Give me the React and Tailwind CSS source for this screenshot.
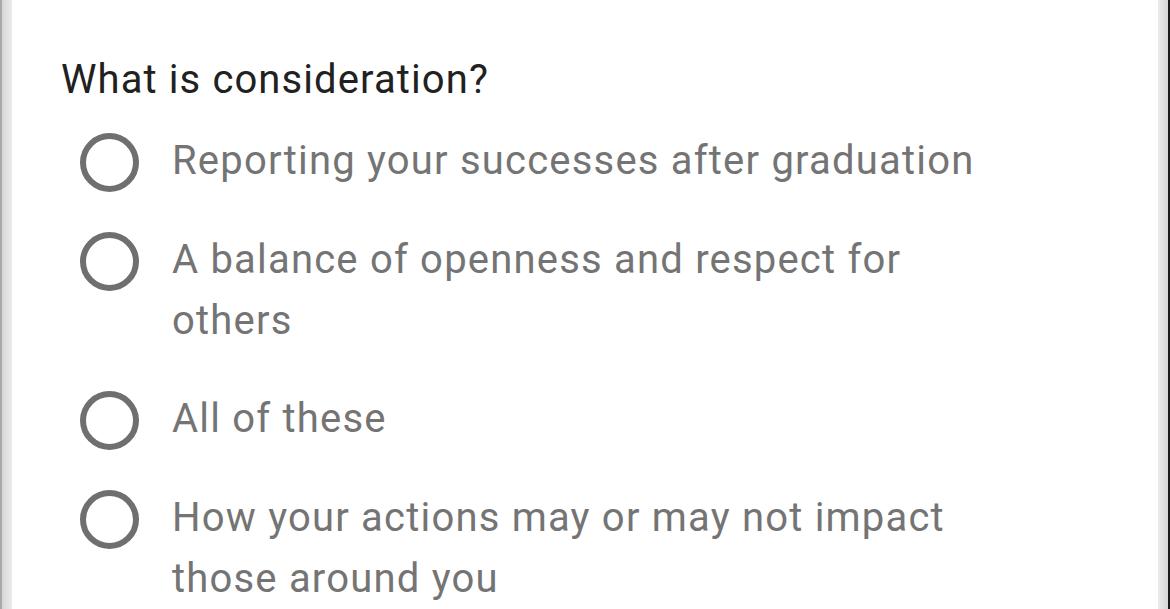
const options = [
  "Reporting your successes after graduation",
  "A balance of openness and respect for others",
  "All of these",
  "How your actions may or may not impact those around you",
];

function Radio() {
  return (
    <div className="mt-[3px] h-[59px] w-[59px] shrink-0 rounded-full border-[6px] border-[#6f6f6f]" />
  );
}

export default function App() {
  return (
    <div className="flex h-[609px] w-[1170px] overflow-hidden bg-white font-['Roboto',sans-serif]">
      <div className="flex w-[12px] shrink-0">
        <div className="w-[2px] bg-[#a9a9a9]" />
        <div className="flex-1 bg-gradient-to-r from-[#d6d6d6] to-[#ececec]" />
      </div>

      <div className="flex-1 pl-[49px] pt-[49px]">
        <h1 className="text-[40px] leading-[61px] tracking-[1.1px] text-[#212121]">What is consideration?</h1>
        <div className="mt-[20px] flex flex-col gap-[37px] pl-[19px]">
          {options.map((opt) => (
            <div key={opt} className="flex items-start">
              <Radio />
              <span className="ml-[33px] w-[820px] text-[40px] leading-[61px] tracking-[1.2px] text-[#747474]">
                {opt}
              </span>
            </div>
          ))}
        </div>
      </div>

      <div className="flex w-[12px] shrink-0">
        <div className="flex-1 bg-gradient-to-r from-[#ececec] to-[#d4d4d4]" />
        <div className="w-[2px] bg-[#1a1a1a]" />
      </div>
    </div>
  );
}
